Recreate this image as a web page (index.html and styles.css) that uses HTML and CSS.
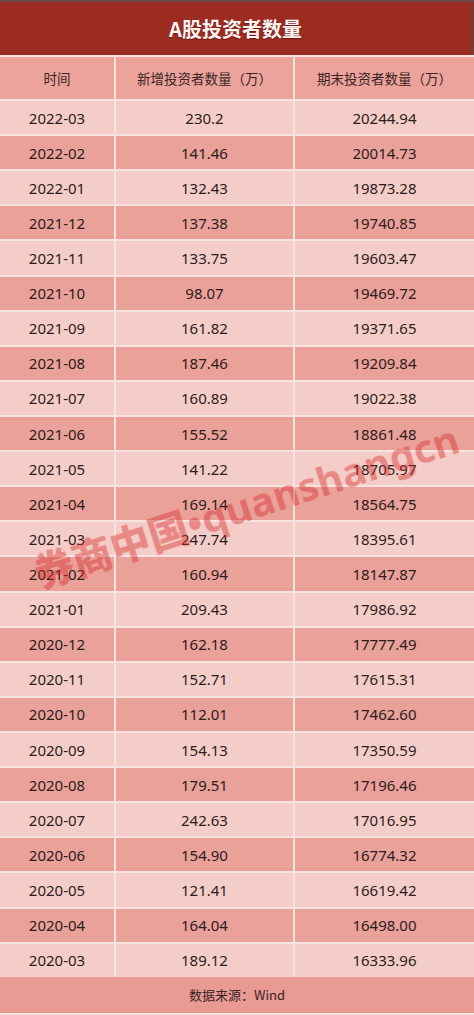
FILE: index.html
```html
<!DOCTYPE html>
<html lang="zh-CN">
<head>
<meta charset="utf-8">
<title>A股投资者数量</title>
<link rel="stylesheet" href="styles.css">
</head>
<body>
<div class="page">
  <div class="topline"></div>
  <div class="title">A股投资者数量</div>
  <div class="table">
    <div class="row head"><div class="cell">时间</div><div class="cell">新增投资者数量（万）</div><div class="cell">期末投资者数量（万）</div></div>
    <div class="row light"><div class="cell">2022-03</div><div class="cell">230.2</div><div class="cell">20244.94</div></div>
    <div class="row dark"><div class="cell">2022-02</div><div class="cell">141.46</div><div class="cell">20014.73</div></div>
    <div class="row light"><div class="cell">2022-01</div><div class="cell">132.43</div><div class="cell">19873.28</div></div>
    <div class="row dark"><div class="cell">2021-12</div><div class="cell">137.38</div><div class="cell">19740.85</div></div>
    <div class="row light"><div class="cell">2021-11</div><div class="cell">133.75</div><div class="cell">19603.47</div></div>
    <div class="row dark"><div class="cell">2021-10</div><div class="cell">98.07</div><div class="cell">19469.72</div></div>
    <div class="row light"><div class="cell">2021-09</div><div class="cell">161.82</div><div class="cell">19371.65</div></div>
    <div class="row dark"><div class="cell">2021-08</div><div class="cell">187.46</div><div class="cell">19209.84</div></div>
    <div class="row light"><div class="cell">2021-07</div><div class="cell">160.89</div><div class="cell">19022.38</div></div>
    <div class="row dark"><div class="cell">2021-06</div><div class="cell">155.52</div><div class="cell">18861.48</div></div>
    <div class="row light"><div class="cell">2021-05</div><div class="cell">141.22</div><div class="cell">18705.97</div></div>
    <div class="row dark"><div class="cell">2021-04</div><div class="cell">169.14</div><div class="cell">18564.75</div></div>
    <div class="row light"><div class="cell">2021-03</div><div class="cell">247.74</div><div class="cell">18395.61</div></div>
    <div class="row dark"><div class="cell">2021-02</div><div class="cell">160.94</div><div class="cell">18147.87</div></div>
    <div class="row light"><div class="cell">2021-01</div><div class="cell">209.43</div><div class="cell">17986.92</div></div>
    <div class="row dark"><div class="cell">2020-12</div><div class="cell">162.18</div><div class="cell">17777.49</div></div>
    <div class="row light"><div class="cell">2020-11</div><div class="cell">152.71</div><div class="cell">17615.31</div></div>
    <div class="row dark"><div class="cell">2020-10</div><div class="cell">112.01</div><div class="cell">17462.60</div></div>
    <div class="row light"><div class="cell">2020-09</div><div class="cell">154.13</div><div class="cell">17350.59</div></div>
    <div class="row dark"><div class="cell">2020-08</div><div class="cell">179.51</div><div class="cell">17196.46</div></div>
    <div class="row light"><div class="cell">2020-07</div><div class="cell">242.63</div><div class="cell">17016.95</div></div>
    <div class="row dark"><div class="cell">2020-06</div><div class="cell">154.90</div><div class="cell">16774.32</div></div>
    <div class="row light"><div class="cell">2020-05</div><div class="cell">121.41</div><div class="cell">16619.42</div></div>
    <div class="row dark"><div class="cell">2020-04</div><div class="cell">164.04</div><div class="cell">16498.00</div></div>
    <div class="row light"><div class="cell">2020-03</div><div class="cell">189.12</div><div class="cell">16333.96</div></div>
  </div>
  <div class="footer">数据来源：Wind</div>
  <div class="watermark"><span class="wm-cjk">券商中国</span><span class="wm-lat">•quanshangcn</span></div>
</div>
</body>
</html>
```
FILE: styles.css
```css
* { box-sizing: border-box; }
html, body { margin: 0; padding: 0; background: #f4cdc8; }
.page {
  position: relative;
  width: 474px;
  height: 1015px;
  overflow: hidden;
  font-family: "Noto Sans", "Noto Sans CJK SC", sans-serif;
  color: #2e1c1c;
  background: #f6e2de;
}
.topline { height: 2px; background: #6d4a47; }
.title {
  height: 53px;
  background: #9c2b22;
  border-right: 3px solid #7a3a35;
  color: #fdf4f2;
  font-family: "Noto Sans CJK SC", sans-serif;
  font-weight: 700;
  font-size: 20px;
  display: flex;
  align-items: center;
  justify-content: center;
  text-shadow: 0 1px 1px rgba(60, 0, 0, 0.5);
}
.table {
  display: flex;
  flex-direction: column;
  gap: 2px;
  padding-top: 2px;
  background: #f6e2de;
}
.row {
  display: grid;
  grid-template-columns: 114px 177px 1fr;
  column-gap: 2px;
  height: 33.12px;
}
.row.head { height: 42px; }
.cell {
  display: flex;
  align-items: center;
  justify-content: center;
  font-size: 15px;
}
.head .cell {
  background: #eba39b;
  font-family: "Noto Sans CJK SC", sans-serif;
  font-size: 13.5px;
  color: #3a2424;
}
.light .cell { background: #f4cdc8; }
.dark .cell { background: #e9a199; }
.footer {
  height: 36px;
  background: #e99b93;
  display: flex;
  align-items: center;
  justify-content: center;
  font-family: "Noto Sans CJK SC", sans-serif;
  font-size: 13px;
  color: #3a2424;
}
.watermark {
  position: absolute;
  left: 9px;
  top: 484px;
  width: 474px;
  text-align: center;
  font-weight: 700;
  font-size: 40px;
  line-height: 1;
  color: rgba(214, 40, 40, 0.42);
  transform: rotate(-18deg);
  transform-origin: center;
  white-space: nowrap;
  filter: blur(0.6px);
}
.wm-cjk { font-family: "Noto Sans CJK SC", sans-serif; font-weight: 900; }
.wm-lat { font-family: "Noto Sans", sans-serif; font-weight: 700; }
```
